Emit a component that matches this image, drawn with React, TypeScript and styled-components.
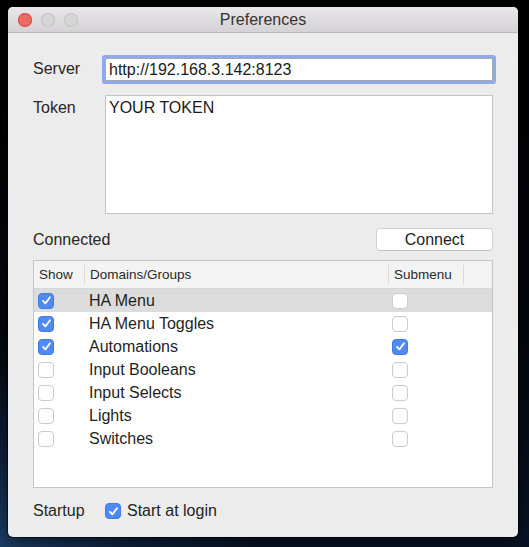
import React, { useState } from 'react';
import styled, { createGlobalStyle } from 'styled-components';

const GlobalStyle = createGlobalStyle`
  html, body {
    margin: 0;
    padding: 0;
    height: 100%;
  }
  body {
    background:
      radial-gradient(ellipse 260px 200px at 0% 100%, #1d3f66 0%, rgba(20, 45, 80, 0.6) 45%, rgba(0, 0, 0, 0) 100%),
      linear-gradient(180deg, #000000 0%, #03060c 60%, #081426 100%);
    font-family: "Liberation Sans", Arial, sans-serif;
    color: #222;
  }
`;

const Desktop = styled.div`
  width: 529px;
  height: 547px;
  padding: 7px 11px 10px 8px;
  box-sizing: border-box;
`;

const Window = styled.div`
  width: 510px;
  height: 530px;
  background: #ececec;
  border-radius: 5px;
  box-shadow: 0 0 0 1px rgba(0, 0, 0, 0.55), 0 6px 18px rgba(0, 0, 0, 0.5);
  overflow: hidden;
  display: flex;
  flex-direction: column;
`;

const TitleBar = styled.div`
  height: 25px;
  flex: none;
  position: relative;
  display: flex;
  align-items: center;
  justify-content: center;
  background: linear-gradient(180deg, #e9e7e9 0%, #d4d2d4 100%);
  border-bottom: 1px solid #b9b9b9;
`;

const Lights = styled.div`
  position: absolute;
  left: 10px;
  top: 6px;
  display: flex;
  gap: 9px;
`;

const Light = styled.span<{ $color: string; $ring: string }>`
  width: 14px;
  height: 14px;
  border-radius: 50%;
  background: ${(p) => p.$color};
  box-shadow: inset 0 0 0 1px ${(p) => p.$ring};
`;

const Title = styled.div`
  font-size: 16px;
  color: #333;
`;

const Content = styled.div`
  padding: 24px 24px 0 25px;
  display: flex;
  flex-direction: column;
`;

const FieldRow = styled.div<{ $top?: boolean }>`
  display: flex;
  align-items: ${(p) => (p.$top ? 'flex-start' : 'center')};
  margin-bottom: 14px;
`;

const Label = styled.div<{ $top?: boolean }>`
  width: 72px;
  flex: none;
  font-size: 16px;
  color: #262626;
  padding-top: ${(p) => (p.$top ? '4px' : '0')};
`;

const TextInput = styled.input`
  flex: 1;
  height: 23px;
  box-sizing: border-box;
  margin: 1px 1px 0 0;
  padding: 0 3px;
  border: 1px solid #a9a9a9;
  background: #fff;
  font-family: inherit;
  font-size: 16px;
  color: #1a1a1a;
  outline: none;
  box-shadow: 0 0 0 3px #8ea9ee;
  border-radius: 1px;
`;

const TokenArea = styled.textarea`
  flex: 1;
  height: 119px;
  box-sizing: border-box;
  margin-right: 1px;
  padding: 2px 3px;
  border: 1px solid #c4c4c4;
  background: #fff;
  font-family: inherit;
  font-size: 16px;
  line-height: 19px;
  color: #1a1a1a;
  resize: none;
  outline: none;
`;

const StatusRow = styled.div`
  display: flex;
  align-items: center;
  justify-content: space-between;
  margin-bottom: 9px;
`;

const Status = styled.div`
  font-size: 16px;
  color: #262626;
`;

const Button = styled.button`
  width: 117px;
  height: 23px;
  margin-right: 1px;
  background: #fff;
  border: 1px solid #d2d2d2;
  border-bottom-color: #c2c2c2;
  border-radius: 4px;
  font-family: inherit;
  font-size: 16px;
  color: #1e1e1e;
  padding: 0;
`;

const Table = styled.div`
  height: 228px;
  box-sizing: border-box;
  margin-right: 1px;
  border: 1px solid #c6c6c6;
  background: #fff;
  display: grid;
  grid-template-columns: 51px 304px 75px 1fr;
  grid-template-rows: 28px;
  grid-auto-rows: 23px;
  align-content: start;
`;

const HeadCell = styled.div<{ $sep?: boolean }>`
  box-sizing: border-box;
  display: flex;
  align-items: center;
  padding-left: 5px;
  font-size: 13.5px;
  color: #2a2a2a;
  background: #f3f3f3;
  border-bottom: 1px solid #d6d6d6;
  position: relative;

  &::after {
    content: '';
    display: ${(p) => (p.$sep ? 'block' : 'none')};
    position: absolute;
    right: 0;
    top: 4px;
    bottom: 4px;
    width: 1px;
    background: #d9d9d9;
  }
`;

const Cell = styled.div<{ $selected: boolean; $pad: number }>`
  display: flex;
  align-items: center;
  padding-left: ${(p) => p.$pad}px;
  background: ${(p) => (p.$selected ? '#dcdcdc' : '#fff')};
  font-size: 16px;
  color: #1f1f1f;
`;

const Box = styled.span<{ $checked: boolean }>`
  width: 16px;
  height: 16px;
  box-sizing: border-box;
  border-radius: 4px;
  display: inline-flex;
  align-items: center;
  justify-content: center;
  background: ${(p) => (p.$checked ? '#4f8af3' : '#fff')};
  border: 1px solid ${(p) => (p.$checked ? '#3f7ae6' : '#cbcbcb')};
  cursor: default;
`;

const FooterRow = styled.div`
  display: flex;
  align-items: center;
  margin-top: 14px;
`;

const Option = styled.label`
  display: flex;
  align-items: center;
  gap: 6px;
  font-size: 16px;
  color: #222;
`;

const Check: React.FC<{ checked: boolean; onToggle?: () => void }> = ({ checked, onToggle }) => (
  <Box $checked={checked} onClick={onToggle}>
    {checked && (
      <svg width="11" height="11" viewBox="0 0 11 11">
        <path d="M2 5.8 L4.4 8.4 L9 2.2" fill="none" stroke="#fff" strokeWidth="1.8" strokeLinecap="round" strokeLinejoin="round" />
      </svg>
    )}
  </Box>
);

type Domain = { name: string; show: boolean; submenu: boolean };

const initialDomains: Domain[] = [
  { name: 'HA Menu', show: true, submenu: false },
  { name: 'HA Menu Toggles', show: true, submenu: false },
  { name: 'Automations', show: true, submenu: true },
  { name: 'Input Booleans', show: false, submenu: false },
  { name: 'Input Selects', show: false, submenu: false },
  { name: 'Lights', show: false, submenu: false },
  { name: 'Switches', show: false, submenu: false },
];

export default function App() {
  const [server, setServer] = useState('http://192.168.3.142:8123');
  const [token, setToken] = useState('YOUR TOKEN');
  const [domains, setDomains] = useState(initialDomains);
  const [startAtLogin, setStartAtLogin] = useState(true);
  const selected = 0;

  const toggle = (index: number, key: 'show' | 'submenu') => {
    setDomains((list) => list.map((d, i) => (i === index ? { ...d, [key]: !d[key] } : d)));
  };

  return (
    <>
      <GlobalStyle />
      <Desktop>
        <Window>
          <TitleBar>
            <Lights>
              <Light $color="#ed6b5f" $ring="#d5524a" />
              <Light $color="#d6d6d6" $ring="#c4c4c4" />
              <Light $color="#d6d6d6" $ring="#c4c4c4" />
            </Lights>
            <Title>Preferences</Title>
          </TitleBar>

          <Content>
            <FieldRow>
              <Label>Server</Label>
              <TextInput value={server} onChange={(e) => setServer(e.target.value)} />
            </FieldRow>

            <FieldRow $top>
              <Label $top>Token</Label>
              <TokenArea value={token} onChange={(e) => setToken(e.target.value)} />
            </FieldRow>

            <StatusRow>
              <Status>Connected</Status>
              <Button>Connect</Button>
            </StatusRow>

            <Table>
              <HeadCell $sep>Show</HeadCell>
              <HeadCell $sep>Domains/Groups</HeadCell>
              <HeadCell $sep>Submenu</HeadCell>
              <HeadCell />
              {domains.map((d, i) => (
                <React.Fragment key={d.name}>
                  <Cell $selected={i === selected} $pad={4}>
                    <Check checked={d.show} onToggle={() => toggle(i, 'show')} />
                  </Cell>
                  <Cell $selected={i === selected} $pad={4}>{d.name}</Cell>
                  <Cell $selected={i === selected} $pad={3}>
                    <Check checked={d.submenu} onToggle={() => toggle(i, 'submenu')} />
                  </Cell>
                  <Cell $selected={i === selected} $pad={0} />
                </React.Fragment>
              ))}
            </Table>

            <FooterRow>
              <Label>Startup</Label>
              <Option>
                <Check checked={startAtLogin} onToggle={() => setStartAtLogin(!startAtLogin)} />
                Start at login
              </Option>
            </FooterRow>
          </Content>
        </Window>
      </Desktop>
    </>
  );
}
